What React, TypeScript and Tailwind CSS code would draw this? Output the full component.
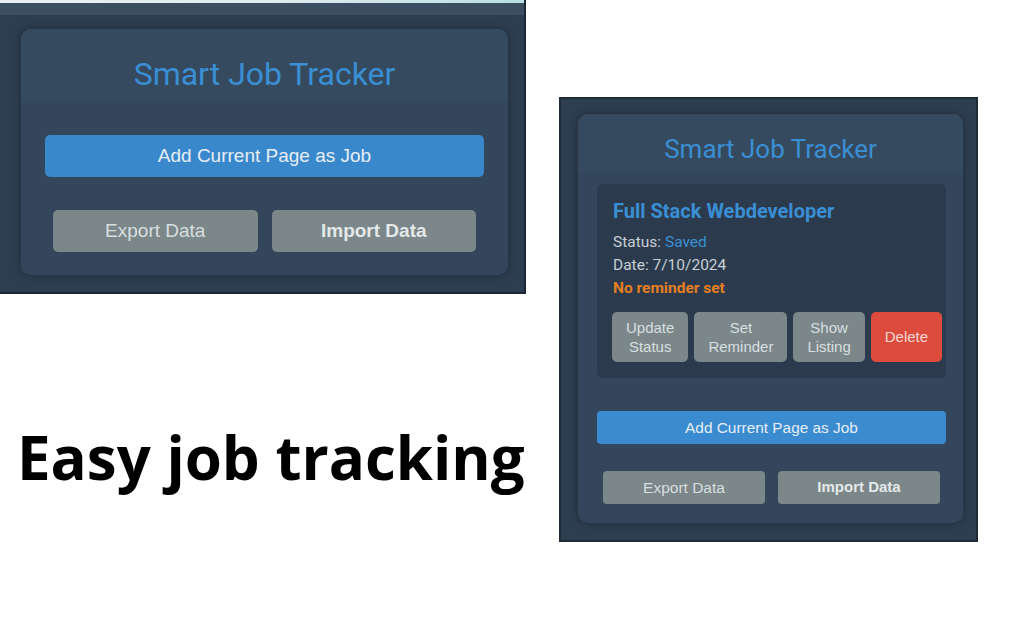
import React from 'react';

const roboto = { fontFamily: 'Roboto, "Liberation Sans", sans-serif' };
const arial = { fontFamily: '"Liberation Sans", Arial, sans-serif' };

type Job = {
  title: string;
  status: string;
  date: string;
};

const job: Job = {
  title: 'Full Stack Webdeveloper',
  status: 'Saved',
  date: '7/10/2024',
};

// Large popup shown at the top-left (no jobs saved yet)
function EmptyTracker() {
  return (
    <div className="w-[526px] h-[294px] bg-[#2d3e50] border-r-2 border-b-2 border-[#1b2733] flex flex-col">
      <div className="h-[3px] bg-gradient-to-r from-[#e9eff1] via-[#e2ecee] to-[#b9e0e4]" />
      <div className="h-[12px] bg-[#3c4f62]" />
      <div className="ml-[21px] mt-[14px] w-[487px] h-[246px] rounded-[10px] bg-[#33465b] shadow-[0_0_8px_rgba(0,0,0,0.3)] flex flex-col">
        <div className="h-[72px] rounded-t-[10px] bg-[#364a5f] pt-[25px]">
          <h1 className="text-center text-[32px] leading-[40px] text-[#3a8fd4]" style={roboto}>
            Smart Job Tracker
          </h1>
        </div>
        <button
          className="mt-[34px] ml-[24px] w-[439px] h-[42px] rounded-[5px] bg-[#3a88cc] text-[19px] text-[#e6eef5]"
          style={arial}
        >
          Add Current Page as Job
        </button>
        <div className="mt-[33px] ml-[32px] w-[423px] flex gap-[14px]">
          <button className="flex-1 h-[42px] rounded-[5px] bg-[#7b8788] text-[19px] text-[#d8dfe0]" style={arial}>
            Export Data
          </button>
          <button className="flex-1 h-[42px] rounded-[5px] bg-[#7b8788] text-[19px] font-bold text-[#e4e9ea]" style={arial}>
            Import Data
          </button>
        </div>
      </div>
    </div>
  );
}

function JobCard({ item }: { item: Job }) {
  const actions = [
    ['Update', 'Status'],
    ['Set', 'Reminder'],
    ['Show', 'Listing'],
  ];

  return (
    <div className="ml-[19px] w-[349px] h-[194px] rounded-[6px] bg-[#2b3b4d] px-[15px] pt-[15px] flex flex-col">
      <h2 className="pl-[1px] text-[20px] leading-[24px] font-bold text-[#3a8fd4]" style={roboto}>
        {item.title}
      </h2>
      <div className="mt-[8px] pl-[1px] text-[15.5px] leading-[23px] text-[#c8cfd5]" style={roboto}>
        <p>
          Status: <span className="text-[#3a8fd4]">{item.status}</span>
        </p>
        <p>Date: {item.date}</p>
        <p className="font-bold text-[#e67e22]">No reminder set</p>
      </div>
      <div className="mt-[12px] flex gap-[6px]">
        {actions.map(([a, b]) => (
          <button
            key={a}
            className="px-[14px] py-[6px] rounded-[5px] bg-[#7b8788] text-[15px] leading-[19px] text-[#d8dfe0]"
            style={arial}
          >
            {a}
            <br />
            {b}
          </button>
        ))}
        <button
          className="px-[14px] rounded-[5px] bg-[#dd4b3d] text-[15px] text-[#f3d9d6]"
          style={arial}
        >
          Delete
        </button>
      </div>
    </div>
  );
}

// Popup with one saved job
function TrackerWithJob() {
  return (
    <div className="w-[419px] h-[445px] bg-[#2d3e50] border-2 border-[#1f2c38] flex flex-col">
      <div className="ml-[17px] mt-[15px] w-[385px] h-[409px] rounded-[10px] bg-[#33465b] shadow-[0_0_8px_rgba(0,0,0,0.3)] flex flex-col">
        <div className="h-[58px] rounded-t-[10px] bg-[#364a5f] pt-[19px]">
          <h1 className="text-center text-[26px] leading-[32px] text-[#3a8fd4]" style={roboto}>
            Smart Job Tracker
          </h1>
        </div>
        <div className="mt-[12px]">
          <JobCard item={job} />
        </div>
        <button
          className="mt-[33px] ml-[19px] w-[349px] h-[33px] rounded-[4px] bg-[#3a8bd0] text-[15.4px] text-[#e6eef5]"
          style={arial}
        >
          Add Current Page as Job
        </button>
        <div className="mt-[27px] ml-[25px] w-[337px] flex gap-[13px]">
          <button className="flex-1 h-[33px] rounded-[4px] bg-[#7b8788] text-[15.5px] text-[#d8dfe0]" style={arial}>
            Export Data
          </button>
          <button className="flex-1 h-[33px] rounded-[4px] bg-[#7b8788] text-[15px] font-bold text-[#e4e9ea]" style={arial}>
            Import Data
          </button>
        </div>
      </div>
    </div>
  );
}

export default function App() {
  return (
    <div className="w-[1020px] h-[638px] bg-white flex overflow-hidden">
      <div className="w-[540px] shrink-0 flex flex-col">
        <EmptyTracker />
        <p
          className="mt-[133px] pl-[17px] text-[60px] leading-[60px] font-bold text-black whitespace-nowrap"
          style={{ fontFamily: '"Open Sans", "Noto Sans", sans-serif' }}
        >
          Easy job tracking
        </p>
      </div>
      <div className="ml-[19px] mt-[97px]">
        <TrackerWithJob />
      </div>
    </div>
  );
}
